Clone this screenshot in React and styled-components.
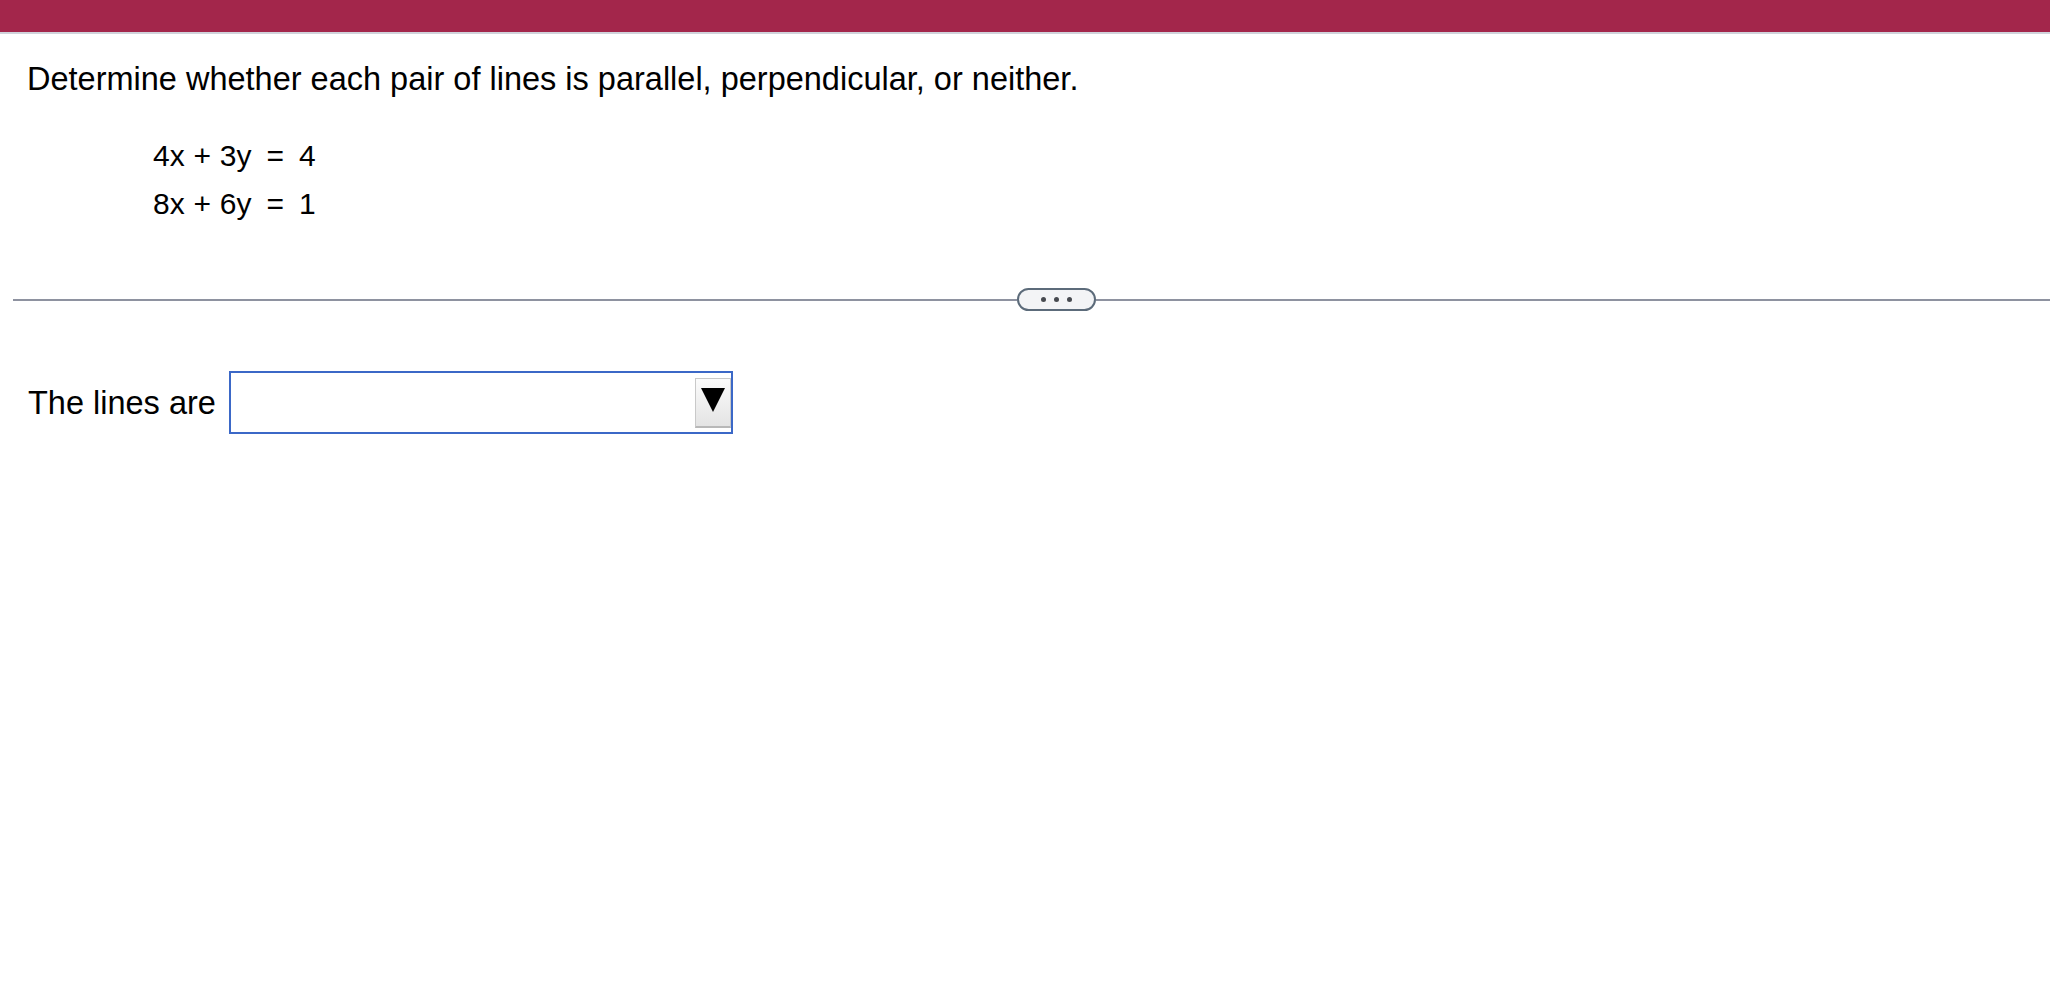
import React from 'react';
import styled, { createGlobalStyle } from 'styled-components';

const GlobalStyle = createGlobalStyle`
  html, body {
    margin: 0;
    padding: 0;
    background: #ffffff;
  }
  body {
    font-family: "Liberation Sans", Arial, sans-serif;
    color: #000000;
  }
`;

const Page = styled.div`
  min-height: 999px;
  background: #ffffff;
`;

const TopBar = styled.div`
  height: 32px;
  background-color: #a3264b; /* maroon header */
  border-bottom: 2px solid #d0d3db;
`;

const Question = styled.div`
  padding: 27px 0 0 27px;
`;

const Prompt = styled.p`
  margin: 0;
  font-size: 32.5px;
  line-height: 36px;
`;

const EquationList = styled.div`
  margin: 35px 0 0 126px;
  display: grid;
  grid-template-columns: auto auto auto;
  justify-content: start;
  font-size: 30px;
  line-height: 48px;
`;

const Lhs = styled.span`
  white-space: pre;
  word-spacing: 0.5px;
`;

const Equals = styled.span`
  padding: 0 15px;
`;

const Rhs = styled.span``;

const Divider = styled.div`
  margin-top: 60px;
  padding-left: 13px;
  display: grid;
  grid-template-columns: 1004px auto 1fr;
  align-items: center;
`;

const Rule = styled.div`
  height: 2px;
  background: #8e92a0;
`;

const MorePill = styled.button`
  box-sizing: border-box;
  width: 79px;
  height: 23px;
  padding: 0;
  border: 2px solid #5c6b7a;
  border-radius: 12px;
  background: #f3f4f6;
  display: flex;
  align-items: center;
  justify-content: center;
  gap: 8px;
  cursor: pointer;
`;

const Dot = styled.span`
  width: 5px;
  height: 5px;
  border-radius: 50%;
  background: #474a50;
`;

const AnswerRow = styled.div`
  margin-top: 60px;
  padding-left: 28px;
  display: flex;
  align-items: center;
  gap: 13px;
`;

const Label = styled.span`
  font-size: 32.5px;
  line-height: 36px;
`;

const SelectBox = styled.div`
  box-sizing: border-box;
  width: 504px;
  height: 63px;
  border: 2px solid #3b68c7;
  background: #ffffff;
  display: flex;
  align-items: center;
  justify-content: flex-end;
`;

const ArrowButton = styled.div`
  box-sizing: border-box;
  width: 36px;
  height: 50px;
  border: 1px solid #c9c9c9;
  border-bottom: 2px solid #b8b8b8;
  background: linear-gradient(#fbfbfb, #e4e4e4);
  display: flex;
  justify-content: center;
  padding-top: 9px;
`;

const Arrow = () => (
  <svg width="24" height="24" viewBox="0 0 24 24">
    <polygon points="0,0 24,0 12,24" fill="#000" />
  </svg>
);

const equations = [
  { lhs: '4x + 3y', rhs: '4' },
  { lhs: '8x + 6y', rhs: '1' },
];

export default function App() {
  return (
    <Page>
      <GlobalStyle />
      <TopBar />
      <Question>
        <Prompt>Determine whether each pair of lines is parallel, perpendicular, or neither.</Prompt>
        <EquationList>
          {equations.map((eq) => (
            <React.Fragment key={eq.lhs}>
              <Lhs>{eq.lhs}</Lhs>
              <Equals>=</Equals>
              <Rhs>{eq.rhs}</Rhs>
            </React.Fragment>
          ))}
        </EquationList>
      </Question>
      <Divider>
        <Rule />
        <MorePill aria-label="more">
          <Dot />
          <Dot />
          <Dot />
        </MorePill>
        <Rule />
      </Divider>
      <AnswerRow>
        <Label>The lines are</Label>
        <SelectBox>
          <ArrowButton>
            <Arrow />
          </ArrowButton>
        </SelectBox>
      </AnswerRow>
    </Page>
  );
}
